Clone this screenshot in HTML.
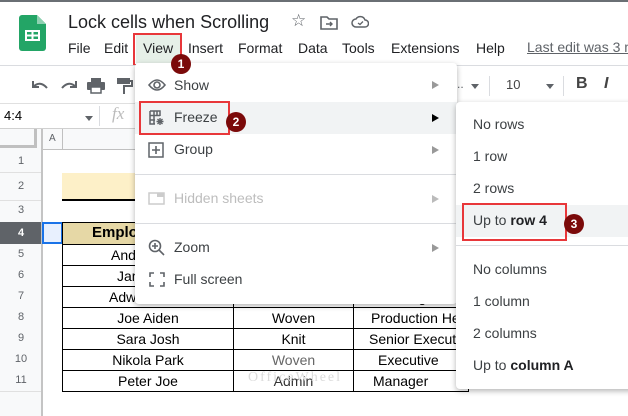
<!DOCTYPE html>
<html><head><meta charset="utf-8"><style>
*{margin:0;padding:0;box-sizing:border-box}
body{width:628px;height:416px;overflow:hidden;background:#fff;font-family:"Liberation Sans",Arial,sans-serif;position:relative;color:#202124}
.a{position:absolute}
.t{position:absolute;white-space:nowrap}
.menu{font-size:14px;color:#202124}
.rn{position:absolute;left:0;width:42px;text-align:center;font-size:11px;color:#5f6368}
.cell{position:absolute;border:1px solid #000;text-align:center;font-size:14px;color:#000;line-height:20px;background:#fff;white-space:nowrap;overflow:hidden}
.mi{position:absolute;font-size:14px;color:#3c4043}
.arr{position:absolute;left:432px;width:0;height:0;border-top:4px solid transparent;border-bottom:4px solid transparent;border-left:7px solid #999}
.badge{position:absolute;width:20px;height:20px;border-radius:50%;background:#7b0a0a;color:#fff;font-size:12px;font-weight:bold;text-align:center;line-height:20px}
.red{position:absolute;border:2.5px solid #e8373a}
</style></head><body>
<div class="a" style="left:0;top:0;width:628px;height:2px;background:#6a6f74"></div>
<svg class="a" style="left:19px;top:15px" width="27" height="36" viewBox="0 0 27 36"><path d="M3 0h15l9 9v24a3 3 0 0 1-3 3H3a3 3 0 0 1-3-3V3a3 3 0 0 1 3-3z" fill="#23a566"/><path d="M18 0v9h9z" fill="#8ed1b1"/><rect x="6" y="15" width="15" height="11" fill="#fff"/><rect x="8" y="17" width="4.5" height="2.5" fill="#23a566"/><rect x="14.5" y="17" width="4.5" height="2.5" fill="#23a566"/><rect x="8" y="21.5" width="4.5" height="2.5" fill="#23a566"/><rect x="14.5" y="21.5" width="4.5" height="2.5" fill="#23a566"/></svg>
<div class="t" style="left:68px;top:12px;font-size:18px;color:#202124">Lock cells when Scrolling</div>
<div class="t" style="left:291px;top:11px;font-size:17px;color:#5f6368">☆</div>
<svg class="a" style="left:320px;top:15px" width="18" height="15"><path d="M1 2h6l2 2h8v10H1z" fill="none" stroke="#5f6368" stroke-width="1.6"/><path d="M6 9h6M10 7l2 2-2 2" fill="none" stroke="#5f6368" stroke-width="1.4"/></svg>
<svg class="a" style="left:351px;top:15px" width="18" height="13"><path d="M5 12a4 4 0 0 1 0-8 5 5 0 0 1 9 1 3.5 3.5 0 0 1 0 7z" fill="none" stroke="#5f6368" stroke-width="1.5"/><path d="M7 8l2 1.5 3-3" fill="none" stroke="#5f6368" stroke-width="1.3"/></svg>
<div class="a" style="left:136px;top:35px;width:45px;height:28px;background:#e6f0e8"></div>
<div class="t menu" style="left:68px;top:40px">File</div>
<div class="t menu" style="left:104px;top:40px">Edit</div>
<div class="t menu" style="left:143px;top:40px">View</div>
<div class="t menu" style="left:188px;top:40px">Insert</div>
<div class="t menu" style="left:238px;top:40px">Format</div>
<div class="t menu" style="left:298px;top:40px">Data</div>
<div class="t menu" style="left:342px;top:40px">Tools</div>
<div class="t menu" style="left:391px;top:40px">Extensions</div>
<div class="t menu" style="left:476px;top:40px">Help</div>
<div class="t" style="left:527px;top:39px;font-size:14px;color:#5f6368;text-decoration:underline">Last edit was 3 m</div>
<div class="red" style="left:133px;top:33px;width:49px;height:33px"></div>
<div class="a" style="left:0;top:65px;width:628px;height:1px;background:#dadce0"></div>
<svg class="a" style="left:31px;top:80px" width="18" height="10"><path d="M2 1v6h6" fill="none" stroke="#5f6368" stroke-width="2"/><path d="M2 7Q9 0 16 8" fill="none" stroke="#5f6368" stroke-width="2"/></svg>
<svg class="a" style="left:60px;top:80px" width="18" height="10"><path d="M16 1v6h-6" fill="none" stroke="#5f6368" stroke-width="2"/><path d="M16 7Q9 0 2 8" fill="none" stroke="#5f6368" stroke-width="2"/></svg>
<svg class="a" style="left:87px;top:78px" width="18" height="16"><rect x="4" y="0" width="10" height="4" fill="#5f6368"/><rect x="0" y="4" width="18" height="8" rx="1" fill="#5f6368"/><rect x="4" y="9" width="10" height="6" fill="#fff" stroke="#5f6368" stroke-width="1.5"/></svg>
<svg class="a" style="left:117px;top:78px" width="16" height="17"><rect x="0" y="0" width="13" height="6" fill="#5f6368"/><path d="M13 3h2v5H7v8" fill="none" stroke="#5f6368" stroke-width="2"/></svg>
<div class="t" style="left:457px;top:77px;font-size:12px;color:#5f6368">..</div>
<div class="a" style="left:471px;top:84px;border-left:4px solid transparent;border-right:4px solid transparent;border-top:5px solid #5f6368"></div>
<div class="a" style="left:489px;top:76px;width:1px;height:20px;background:#dadce0"></div>
<div class="t" style="left:506px;top:77px;font-size:13px;color:#444">10</div>
<div class="a" style="left:546px;top:84px;border-left:4px solid transparent;border-right:4px solid transparent;border-top:5px solid #5f6368"></div>
<div class="a" style="left:563px;top:76px;width:1px;height:20px;background:#dadce0"></div>
<div class="t" style="left:576px;top:75px;font-size:16px;font-weight:bold;color:#444">B</div>
<div class="t" style="left:604px;top:75px;font-size:16px;font-style:italic;font-weight:bold;color:#444">I</div>
<div class="a" style="left:0;top:103px;width:628px;height:1px;background:#e0e0e0"></div>
<div class="t" style="left:4px;top:108px;font-size:13px;color:#000">4:4</div>
<div class="a" style="left:85px;top:116px;border-left:4px solid transparent;border-right:4px solid transparent;border-top:5px solid #5f6368"></div>
<div class="a" style="left:99px;top:106px;width:1px;height:20px;background:#dadce0"></div>
<div class="t" style="left:112px;top:104px;font-size:17px;font-style:italic;color:#bbb;font-family:'Liberation Serif',serif">fx</div>
<div class="a" style="left:0;top:128px;width:628px;height:1px;background:#d0d0d0"></div>
<div class="a" style="left:0;top:129px;width:42px;height:287px;background:#f8f9fa"></div>
<div class="a" style="left:0;top:129px;width:37px;height:19px;border-right:3px solid #c0c0c0;border-bottom:3px solid #c0c0c0"></div>
<div class="a" style="left:42px;top:129px;width:586px;height:21px;background:#f8f9fa;border-bottom:1px solid #c0c0c0"></div>
<div class="a" style="left:41px;top:129px;width:2px;height:287px;background:#c4c4c4"></div>
<div class="a" style="left:62px;top:129px;width:1px;height:21px;background:#c0c0c0"></div>
<div class="t" style="left:49px;top:133px;font-size:10px;color:#5f6368">A</div>
<div class="rn" style="top:155px">1</div>
<div class="rn" style="top:180px">2</div>
<div class="rn" style="top:204px">3</div>
<div class="a" style="left:0;top:222px;width:41px;height:22px;background:#5f6368"></div>
<div class="rn" style="top:227px;color:#fff;font-weight:bold">4</div>
<div class="rn" style="top:248px">5</div>
<div class="rn" style="top:269px">6</div>
<div class="rn" style="top:290px">7</div>
<div class="rn" style="top:311px">8</div>
<div class="rn" style="top:332px">9</div>
<div class="rn" style="top:353px">10</div>
<div class="rn" style="top:374px">11</div>
<div class="a" style="left:0;top:172px;width:41px;height:1px;background:#e0e0e0"></div>
<div class="a" style="left:0;top:200px;width:41px;height:1px;background:#e0e0e0"></div>
<div class="a" style="left:0;top:391px;width:41px;height:1px;background:#e0e0e0"></div>
<div class="a" style="left:62px;top:173px;width:400px;height:26px;background:#fdf0c8"></div>
<div class="a" style="left:62px;top:199px;width:400px;height:2px;background:#000"></div>
<div class="a" style="left:42px;top:222px;width:21px;height:22px;background:#e8f0fe;border:2px solid #1a73e8"></div>
<div class="cell" style="left:62px;top:222px;width:172px;height:23px;background:#e6d8a6;font-weight:bold;font-size:15px;text-align:left;padding-left:29px">Employee Name</div>
<div class="cell" style="left:62px;top:244px;width:172px;height:22px;text-align:left;padding-left:48px">Andrew</div>
<div class="cell" style="left:62px;top:265px;width:172px;height:22px;text-align:left;padding-left:54px">James</div>
<div class="cell" style="left:62px;top:286px;width:172px;height:22px;text-align:left;padding-left:46px">Adward</div>
<div class="cell" style="left:62px;top:307px;width:172px;height:22px">Joe Aiden</div>
<div class="cell" style="left:62px;top:328px;width:172px;height:22px">Sara Josh</div>
<div class="cell" style="left:62px;top:349px;width:172px;height:22px">Nikola Park</div>
<div class="cell" style="left:62px;top:370px;width:172px;height:22px">Peter Joe</div>
<div class="cell" style="left:233px;top:286px;width:121px;height:22px">Knit</div>
<div class="cell" style="left:233px;top:307px;width:121px;height:22px">Woven</div>
<div class="cell" style="left:233px;top:328px;width:121px;height:22px">Knit</div>
<div class="cell" style="left:233px;top:349px;width:121px;height:22px;color:#666">Woven</div>
<div class="cell" style="left:233px;top:370px;width:121px;height:22px;color:#333">Admin</div>
<div class="cell" style="left:353px;top:286px;width:116px;height:22px">Manager</div>
<div class="cell" style="left:353px;top:307px;width:116px;height:22px;text-align:left;padding-left:17px">Production Head</div>
<div class="cell" style="left:353px;top:328px;width:116px;height:22px;text-align:left;padding-left:15px">Senior Executive</div>
<div class="cell" style="left:353px;top:349px;width:116px;height:22px;text-align:left;padding-left:24px">Executive</div>
<div class="cell" style="left:353px;top:370px;width:116px;height:22px;text-align:left;padding-left:19px">Manager</div>
<div class="t" style="left:248px;top:370px;font-size:14px;color:#dcdcdc;letter-spacing:2px;font-family:'Liberation Serif',serif">OfficeWheel</div>
<div class="a" style="left:135px;top:63px;width:322px;height:241px;background:#fff;box-shadow:0 2px 6px rgba(0,0,0,.3);border-radius:4px"></div>
<svg class="a" style="left:148px;top:78px" width="18" height="14"><path d="M1 7Q9-3 17 7Q9 17 1 7z" fill="none" stroke="#5f6368" stroke-width="1.6"/><circle cx="9" cy="7" r="3" fill="none" stroke="#5f6368" stroke-width="1.6"/></svg>
<div class="mi" style="left:174px;top:77px">Show</div><div class="arr" style="top:81px"></div>
<div class="a" style="left:135px;top:102px;width:322px;height:32px;background:#f1f3f4"></div>
<svg class="a" style="left:149px;top:110px" width="16" height="16"><path d="M1 1h10v5M1 1v13h5M1 5.5h10M1 10h5M5 1v13M8 1v5" fill="none" stroke="#5f6368" stroke-width="1.5"/><path d="M11 8v7M7.5 11.5h7M8.5 9l5 5M13.5 9l-5 5" stroke="#5f6368" stroke-width="1.4"/></svg>
<div class="mi" style="left:174px;top:109px">Freeze</div>
<div class="arr" style="top:114px;border-left-color:#000"></div>
<svg class="a" style="left:148px;top:142px" width="16" height="16"><rect x="1" y="1" width="14" height="14" fill="none" stroke="#5f6368" stroke-width="1.5"/><path d="M8 4v8M4 8h8" stroke="#5f6368" stroke-width="1.6"/></svg>
<div class="mi" style="left:174px;top:141px">Group</div><div class="arr" style="top:146px"></div>
<div class="a" style="left:135px;top:174px;width:322px;height:1px;background:#dadce0"></div>
<svg class="a" style="left:148px;top:192px" width="17" height="13"><rect x="1" y="1" width="15" height="11" fill="none" stroke="#ccc" stroke-width="1.5"/><rect x="9" y="1" width="7" height="4" fill="#ccc"/></svg>
<div class="mi" style="left:174px;top:190px;color:#bdbdbd">Hidden sheets</div><div class="arr" style="top:195px;border-left-color:#bbb"></div>
<div class="a" style="left:135px;top:223px;width:322px;height:1px;background:#dadce0"></div>
<svg class="a" style="left:148px;top:239px" width="17" height="17"><circle cx="7" cy="7" r="5.5" fill="none" stroke="#5f6368" stroke-width="1.6"/><path d="M11 11l5 5M7 4v6M4 7h6" stroke="#5f6368" stroke-width="1.6"/></svg>
<div class="mi" style="left:174px;top:239px">Zoom</div><div class="arr" style="top:244px"></div>
<svg class="a" style="left:149px;top:272px" width="16" height="15"><path d="M1 5V1h4M11 1h4v4M15 10v4h-4M5 14H1v-4" fill="none" stroke="#5f6368" stroke-width="1.6"/></svg>
<div class="mi" style="left:174px;top:271px">Full screen</div>
<div class="red" style="left:139px;top:101px;width:91px;height:34px"></div>
<div class="a" style="left:456px;top:102px;width:180px;height:287px;background:#fff;box-shadow:0 2px 6px rgba(0,0,0,.3);border-radius:4px"></div>
<div class="mi" style="left:473px;top:116px">No rows</div>
<div class="mi" style="left:473px;top:148px">1 row</div>
<div class="mi" style="left:473px;top:180px">2 rows</div>
<div class="a" style="left:456px;top:205px;width:172px;height:32px;background:#f1f3f4"></div>
<div class="mi" style="left:473px;top:212px">Up to <b style="color:#202124">row 4</b></div>
<div class="a" style="left:456px;top:245px;width:172px;height:1px;background:#dadce0"></div>
<div class="mi" style="left:473px;top:261px">No columns</div>
<div class="mi" style="left:473px;top:293px">1 column</div>
<div class="mi" style="left:473px;top:325px">2 columns</div>
<div class="mi" style="left:473px;top:357px">Up to <b style="color:#202124">column A</b></div>
<div class="red" style="left:462px;top:203px;width:105px;height:38px"></div>
<div class="badge" style="left:171px;top:54px">1</div>
<div class="badge" style="left:226px;top:112px">2</div>
<div class="badge" style="left:564px;top:214px">3</div>
</body></html>
